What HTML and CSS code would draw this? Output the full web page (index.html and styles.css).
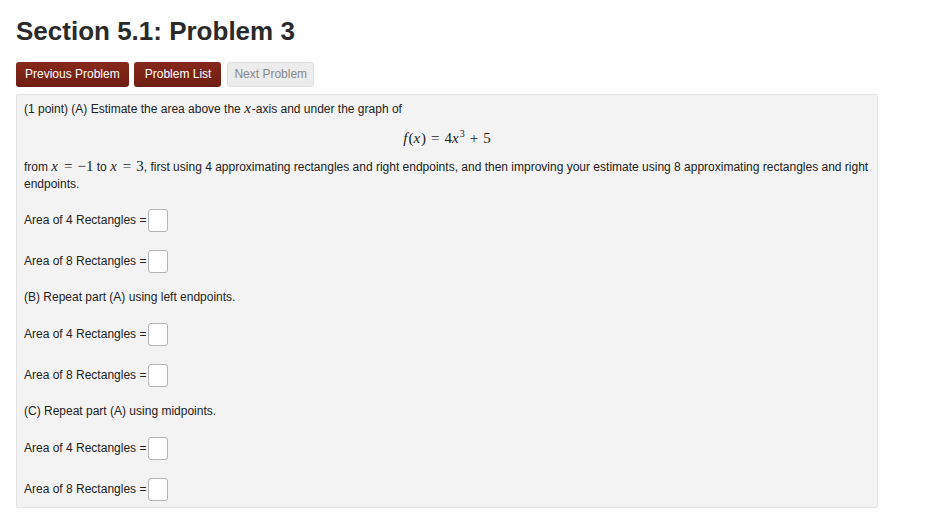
FILE: index.html
```html
<!DOCTYPE html>
<html lang="en">
	<head>
		<meta charset="utf-8">
		<title>Section 5.1: Problem 3</title>
		<link rel="stylesheet" href="styles.css">
	</head>
	<body>
		<h1 class="title">Section 5.1: Problem 3</h1>

		<div class="nav">
			<a href="javascript:;" class="btn">Previous Problem</a>
			<a href="javascript:;" class="btn btn-list">Problem List</a>
			<span class="btn btn-off">Next Problem</span>
		</div>

		<div class="problem">
			<p>(1 point) (A) Estimate the area above the <i class="mv">x</i>-axis and under the graph of</p>
			<div class="display"><i class="mv">f</i><span class="mn">(</span><i class="mv">x</i><span class="mn">)</span><span class="mo">=</span><span class="mn">4</span><i class="mv">x</i><sup class="mn">3</sup><span class="mo">+</span><span class="mn">5</span></div>
			<p class="from">from <i class="mv">x</i><span class="mo">=</span><span class="mn">&minus;1</span> to <i class="mv">x</i><span class="mo">=</span><span class="mn">3</span>, first using 4 approximating rectangles and right endpoints, and then improving your estimate using 8 approximating rectangles and right <span>endpoints.</span></p>

			<div class="row">Area of 4 Rectangles =<input class="ans" type="text"></div>
			<div class="row">Area of 8 Rectangles =<input class="ans" type="text"></div>

			<p>(B) Repeat part (A) using left endpoints.</p>

			<div class="row">Area of 4 Rectangles =<input class="ans" type="text"></div>
			<div class="row">Area of 8 Rectangles =<input class="ans" type="text"></div>

			<p>(C) Repeat part (A) using midpoints.</p>

			<div class="row">Area of 4 Rectangles =<input class="ans" type="text"></div>
			<div class="row">Area of 8 Rectangles =<input class="ans" type="text"></div>
		</div>
	</body>
</html>
```

FILE: styles.css
```css
body {
	margin: 0;
	padding: 0 16px;
	font-family: "Liberation Sans", Arial, sans-serif;
	font-size: 12px;
	color: #222;
	background-color: #fff;
}
a {
	text-decoration: none;
}

.title {
	margin: 16px 0 0;
	font-size: 26px;
	line-height: 30px;
	font-weight: bold;
	color: #2a2a2a;
}

.nav {
	display: flex;
	gap: 5px;
	margin-top: 16px;
}

.btn {
	display: block;
	height: 25px;
	line-height: 25px;
	padding: 0 9px;
	border-radius: 3px;
	background-color: #7b2318;
	background-image: linear-gradient(#86291c, #6f1d13);
	color: #fff;
	font-size: 12px;
}

.btn-list {
	padding: 0 10px 0 11px;
}

.btn-off {
	margin-left: 1px;
	padding: 0 6px;
	background-color: #ececec;
	background-image: none;
	border: 1px solid #e0e0e0;
	height: 23px;
	line-height: 23px;
	color: #8a8a8a;
}

.problem {
	width: 846px;
	margin-top: 7px;
	padding: 5px 7px 5px;
	background-color: #f3f3f3;
	border: 1px solid #e4e4e4;
	border-radius: 2px;
	line-height: 17px;
}

.problem p {
	margin: 15px 0 0;
}

.problem p:first-child {
	margin-top: 0;
}

.display {
	margin: 10px 0 10px;
	height: 20px;
	line-height: 20px;
	text-align: center;
	font-size: 15px;
}

.display + p {
	margin-top: 0;
}

.problem .from {
	margin-bottom: -1px;
}

.mv,
.mn,
.mo {
	font-family: "Liberation Serif", "Times New Roman", serif;
	font-size: 15px;
	line-height: 17px;
}

.mv {
	display: inline-block;
	font-style: italic;
	padding-right: 1px;
}

.mo {
	margin: 0 5px;
}

.display sup {
	font-size: 10px;
	vertical-align: 6px;
	line-height: 0;
}

.row {
	display: flex;
	align-items: center;
	height: 26px;
	margin-top: 15px;
}

.ans {
	box-sizing: border-box;
	width: 20px;
	height: 23px;
	margin: 0 0 0 2px;
	padding: 0;
	border: 1px solid #b5b5b5;
	border-radius: 3px;
	background-color: #fff;
}
```
